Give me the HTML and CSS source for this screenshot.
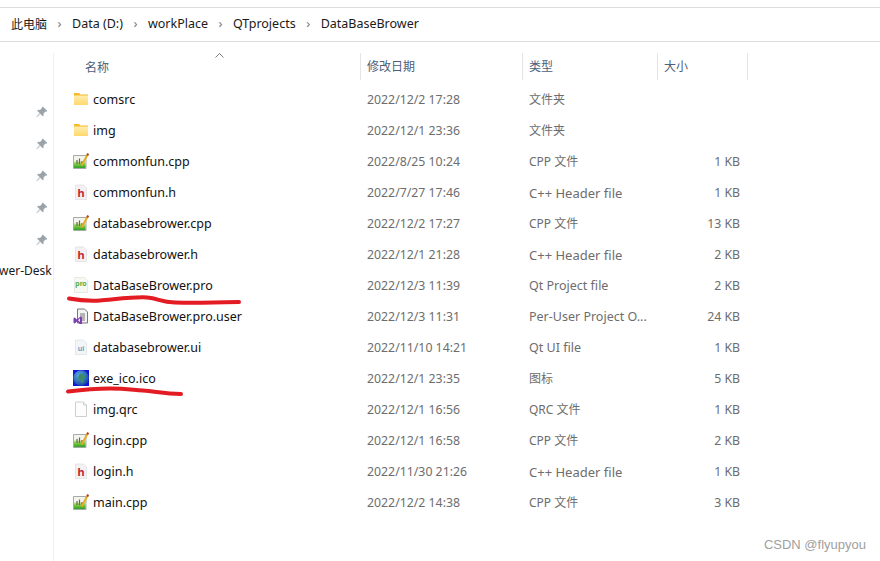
FILE: index.html
```html
<!DOCTYPE html>
<html lang="zh">
<head>
<meta charset="utf-8">
<title>DataBaseBrower</title>
<link rel="stylesheet" href="styles.css">
</head>
<body>
<svg class="defs" width="0" height="0" aria-hidden="true">
  <defs>
    <linearGradient id="fold" x1="0" y1="0" x2="0" y2="1"><stop offset="0" stop-color="#ffedb0"/><stop offset="1" stop-color="#ffd86c"/></linearGradient>
    <linearGradient id="grn" x1="0" y1="0" x2="0" y2="1"><stop offset="0" stop-color="#c9e49a"/><stop offset=".5" stop-color="#72c23a"/><stop offset="1" stop-color="#2f9e2c"/></linearGradient>
    <radialGradient id="globe" cx=".4" cy=".35" r=".7"><stop offset="0" stop-color="#5fb0e8"/><stop offset="1" stop-color="#123f9a"/></radialGradient>
    <symbol id="i-folder" viewBox="0 0 16 16">
      <path d="M1 2h5l1.500 1.500H15V5H1z" fill="#f7b92b"/>
      <path d="M1 4.500h14V14H1z" fill="url(#fold)"/>
    </symbol>
    <symbol id="i-cpp" viewBox="0 0 16 16">
      <path d="M.5 2.500h12.500v13H.5z" fill="#f3f4ee" stroke="#a5aba6" stroke-width="1"/>
      <path d="M1 8.500h11.500V15H1z" fill="url(#grn)"/>
      <path d="M4 11V7M6.500 11V5.500M9 11V8" stroke="#66684a" stroke-width="1.200"/>
      <path d="M8.500 12.500L15 1" fill="none" stroke="#e5ac2c" stroke-width="2"/>
      <path d="M14.200 2.400L15.200.6" fill="none" stroke="#b5432f" stroke-width="2"/>
    </symbol>
    <symbol id="i-h" viewBox="0 0 16 16">
      <path d="M2.500 1h8l3 3v11.500h-11z" fill="#f5f0f1" stroke="#dfdfdf" stroke-width=".8"/>
      <text x="8" y="12.500" text-anchor="middle" class="ic-h">h</text>
    </symbol>
    <symbol id="i-pro" viewBox="0 0 16 16">
      <path d="M1.500 .5h10l3 3v12h-13z" fill="#f6f8f2" stroke="#e2e4de" stroke-width=".8"/>
      <text x="8" y="8.500" text-anchor="middle" class="ic-pro">pro</text>
    </symbol>
    <symbol id="i-user" viewBox="0 0 16 16">
      <path d="M4.500 1h7l3 3v11h-10z" fill="#f3f3f3" stroke="#77777d" stroke-width="1"/>
      <path d="M7 6h5M7 8h5M9 10h3M9 12h3" stroke="#77777d" stroke-width="1"/>
      <path d="M.5 10.300l1.200-.7 2.300 1.900 3.500-3 1.500.7v6.600l-1.500.7-3.500-3-2.300 1.900-1.200-.7zM7 10.300l-2 1.900 2 1.900z" fill="#7d3fb0" fill-rule="evenodd"/>
    </symbol>
    <symbol id="i-ui" viewBox="0 0 16 16">
      <path d="M2.500 1h8l3 3v11.500h-11z" fill="#f2f6f8" stroke="#e0e3e6" stroke-width=".8"/>
      <text x="8" y="11.500" text-anchor="middle" class="ic-ui">ui</text>
    </symbol>
    <symbol id="i-ico" viewBox="0 0 16 16">
      <rect width="16" height="16" fill="#1414e0"/>
      <circle cx="8" cy="8" r="7.800" fill="url(#globe)"/>
      <path d="M7 3.500l4 1 1.500 3-2 2 .5 3-2.500 1-1-3.500-2.500-1 .5-3z" fill="#3f8a6a"/>
    </symbol>
    <symbol id="i-blank" viewBox="0 0 16 16">
      <path d="M2.500 1h8l3 3v11.500h-11z" fill="#fdfdfd" stroke="#cfcfcf" stroke-width="1"/>
      <path d="M10.500 1v3h3" fill="#f1f1f1" stroke="#cfcfcf" stroke-width="1"/>
    </symbol>
    <symbol id="i-pin" viewBox="0 0 12 12">
      <path d="M7 .7l4.300 4.300-1 .8-.8-.3-2 2 .2 1.900-.9.900L4.200 7.700 1 11l-.5-.5 3.300-3.200L1.200 4.700l.9-.9 1.900.2 2-2-.3-.8z" fill="#9aa3aa"/>
    </symbol>
  </defs>
</svg>

<header class="crumbs">
  <span class="crumb crumb-first">此电脑</span><span class="sep">›</span>
  <span class="crumb">Data (D:)</span><span class="sep">›</span>
  <span class="crumb">workPlace</span><span class="sep">›</span>
  <span class="crumb">QTprojects</span><span class="sep">›</span>
  <span class="crumb">DataBaseBrower</span>
</header>

<main class="explorer">
  <aside class="side">
    <svg class="pin"><use href="#i-pin"/></svg>
    <svg class="pin"><use href="#i-pin"/></svg>
    <svg class="pin"><use href="#i-pin"/></svg>
    <svg class="pin"><use href="#i-pin"/></svg>
    <svg class="pin"><use href="#i-pin"/></svg>
    <div class="side-label">wer-Desk</div>
  </aside>
  <section class="list">
    <div class="row head">
      <div class="c-name">名称<svg class="caret" viewBox="0 0 9 5"><path d="M.5 4.500l4-4 4 4" fill="none" stroke="#7d7d7d"/></svg></div>
      <div class="c-date">修改日期</div>
      <div class="c-type">类型</div>
      <div class="c-size">大小</div>
    </div>
    <div class="row"><div class="c-name"><svg class="ic"><use href="#i-folder"/></svg>comsrc</div><div class="c-date">2022/12/2 17:28</div><div class="c-type cjk">文件夹</div><div class="c-size"></div></div>
    <div class="row"><div class="c-name"><svg class="ic"><use href="#i-folder"/></svg>img</div><div class="c-date">2022/12/1 23:36</div><div class="c-type cjk">文件夹</div><div class="c-size"></div></div>
    <div class="row"><div class="c-name"><svg class="ic"><use href="#i-cpp"/></svg>commonfun.cpp</div><div class="c-date">2022/8/25 10:24</div><div class="c-type cjk">CPP 文件</div><div class="c-size">1 KB</div></div>
    <div class="row"><div class="c-name"><svg class="ic"><use href="#i-h"/></svg>commonfun.h</div><div class="c-date">2022/7/27 17:46</div><div class="c-type wide">C++ Header file</div><div class="c-size">1 KB</div></div>
    <div class="row"><div class="c-name"><svg class="ic"><use href="#i-cpp"/></svg>databasebrower.cpp</div><div class="c-date">2022/12/2 17:27</div><div class="c-type cjk">CPP 文件</div><div class="c-size">13 KB</div></div>
    <div class="row"><div class="c-name"><svg class="ic"><use href="#i-h"/></svg>databasebrower.h</div><div class="c-date">2022/12/1 21:28</div><div class="c-type wide">C++ Header file</div><div class="c-size">2 KB</div></div>
    <div class="row"><div class="c-name"><svg class="ic"><use href="#i-pro"/></svg>DataBaseBrower.pro</div><div class="c-date">2022/12/3 11:39</div><div class="c-type latin">Qt Project file</div><div class="c-size">2 KB</div></div>
    <div class="row"><div class="c-name"><svg class="ic"><use href="#i-user"/></svg>DataBaseBrower.pro.user</div><div class="c-date">2022/12/3 11:31</div><div class="c-type latin">Per-User Project O...</div><div class="c-size">24 KB</div></div>
    <div class="row"><div class="c-name"><svg class="ic"><use href="#i-ui"/></svg>databasebrower.ui</div><div class="c-date">2022/11/10 14:21</div><div class="c-type latin">Qt UI file</div><div class="c-size">1 KB</div></div>
    <div class="row"><div class="c-name"><svg class="ic"><use href="#i-ico"/></svg>exe_ico.ico</div><div class="c-date">2022/12/1 23:35</div><div class="c-type cjk">图标</div><div class="c-size">5 KB</div></div>
    <div class="row"><div class="c-name"><svg class="ic"><use href="#i-blank"/></svg>img.qrc</div><div class="c-date">2022/12/1 16:56</div><div class="c-type cjk">QRC 文件</div><div class="c-size">1 KB</div></div>
    <div class="row"><div class="c-name"><svg class="ic"><use href="#i-cpp"/></svg>login.cpp</div><div class="c-date">2022/12/1 16:58</div><div class="c-type cjk">CPP 文件</div><div class="c-size">2 KB</div></div>
    <div class="row"><div class="c-name"><svg class="ic"><use href="#i-h"/></svg>login.h</div><div class="c-date">2022/11/30 21:26</div><div class="c-type wide">C++ Header file</div><div class="c-size">1 KB</div></div>
    <div class="row"><div class="c-name"><svg class="ic"><use href="#i-cpp"/></svg>main.cpp</div><div class="c-date">2022/12/2 14:38</div><div class="c-type cjk">CPP 文件</div><div class="c-size">3 KB</div></div>
  </section>
</main>

<svg class="marks" viewBox="0 0 880 561" aria-hidden="true">
  <path d="M69 298.500C80 300.500 90 301 100 300.500S135 296.500 147 297.500 160 302 175 302.500 220 302.500 239 302" />
  <path d="M68 391.500C80 390 95 388.500 110 388.500S130 389.500 143 390.500 165 394 181 394" />
</svg>
<div class="watermark">CSDN @flyupyou</div>
</body>
</html>
```
FILE: styles.css
```css
* { box-sizing: border-box; }
html, body { margin: 0; height: 100%; }
body {
  position: relative;
  width: 880px;
  height: 561px;
  overflow: hidden;
  background: #fff;
  padding-top: 7px;
  font-family: "Noto Sans", "Noto Sans CJK SC", sans-serif;
  font-size: 12px;
  color: #000;
}
.defs { position: absolute; }
.crumbs {
  display: flex;
  align-items: center;
  height: 35px;
  padding-left: 11px;
  padding-bottom: 2px;
  border-top: 1px solid #dcdcdc;
  border-bottom: 1px solid #dcdcdc;
  font-size: 12.5px;
  color: #1a1a1a;
}
.crumb-first { font-family: "Noto Sans CJK SC", sans-serif; font-size: 12px; }
.sep {
  width: 25px;
  text-align: center;
  color: #777;
  font-size: 13px;
  line-height: 1;
}
.explorer { display: flex; }
.side {
  width: 54px;
  flex: none;
  border-right: 1px solid #f0f0f0;
  height: 510px;
  margin-top: 11px;
  padding-top: 53px;
  display: flex;
  flex-direction: column;
  align-items: flex-end;
  overflow: hidden;
}
.pin {
  width: 12px;
  height: 12px;
  margin: 0 5px 20px 0;
  flex: none;
}
.side-label {
  margin-top: -4px;
  margin-right: 1px;
  width: 53px;
  white-space: nowrap;
  overflow: hidden;
  color: #1a1a1a;
  font-size: 12px;
}
.list { flex: 1; padding-top: 11px; }
.row {
  display: flex;
  align-items: center;
  height: 31px;
  white-space: nowrap;
  color: #6d6d6d;
  font-size: 12.3px;
}
.row.head {
  height: 27px;
  margin-bottom: 4px;
  color: #4c607a;
  font-family: "Noto Sans CJK SC", sans-serif;
  font-size: 12px;
}
.c-name {
  display: flex;
  align-items: center;
  position: relative;
  width: 306px;
  padding-left: 19px;
  color: #111;
  font-size: 12.5px;
}
.c-date { width: 162px; padding-left: 7px; }
.c-type { width: 135px; padding-left: 7px; }
.c-type.cjk { font-size: 12px; padding-bottom: 2px; }
.c-type.latin { font-size: 12.5px; }
.c-type.wide { font-size: 13px; }
.c-size { width: 91px; padding-right: 8px; text-align: right; }
.head .c-name { padding-left: 31px; color: #4c607a; font-size: 12px; }
.head > div { height: 27px; line-height: 25px; }
.head .c-date, .head .c-type, .head .c-size { border-left: 1px solid #e5e5e5; padding-left: 6px; }
.head .c-size { text-align: left; border-right: 1px solid #e5e5e5; padding-right: 0; }
.caret {
  position: absolute;
  left: 161px;
  top: 0;
  width: 9px;
  height: 5px;
}
.ic {
  width: 16px;
  height: 16px;
  margin-right: 4px;
  flex: none;
  position: relative;
  top: -1px;
}
.ic-h { font: bold 11.500px "Liberation Sans", sans-serif; fill: #c0202e; }
.ic-pro { font: bold 7px "Liberation Sans", sans-serif; fill: #4fa82a; }
.ic-ui { font: bold 7.500px "Liberation Sans", sans-serif; fill: #62a6cc; }
.marks {
  position: absolute;
  inset: 0;
  width: 880px;
  height: 561px;
  pointer-events: none;
  fill: none;
  stroke: #e31b23;
  stroke-width: 4;
  stroke-linecap: round;
}
.watermark {
  position: absolute;
  right: 14px;
  bottom: 9px;
  font-family: "Liberation Sans", sans-serif;
  font-size: 13px;
  color: #a0a0a0;
}
```
